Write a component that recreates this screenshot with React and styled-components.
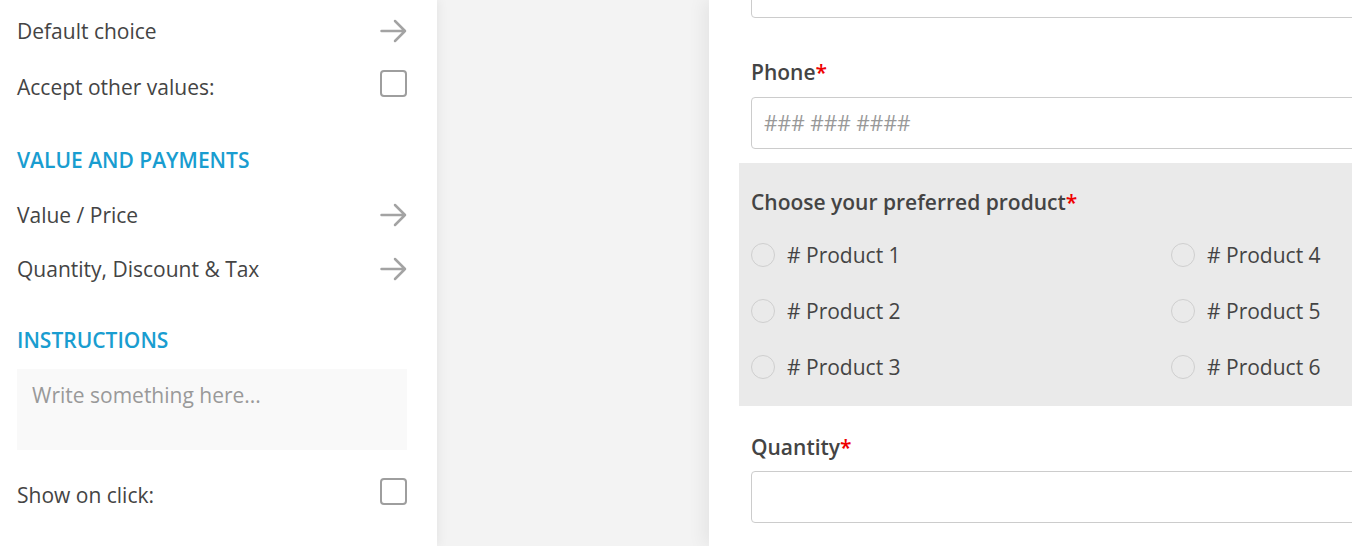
import React from 'react'
import styled, { createGlobalStyle } from 'styled-components'

const Global = createGlobalStyle`
  html, body {
    margin: 0;
    padding: 0;
    background: #f3f3f3;
    font-family: "Open Sans", "Liberation Sans", sans-serif;
    color: #444;
  }
  * { box-sizing: border-box; }
`

const Page = styled.div`
  display: flex;
  width: 1352px;
  height: 546px;
  overflow: hidden;
  background: #f3f3f3;
`

const Sidebar = styled.aside`
  width: 437px;
  flex-shrink: 0;
  background: #fff;
  padding: 4px 30px 0 17px;
  box-shadow: 2px 0 10px rgba(0, 0, 0, 0.06);
  position: relative;
  z-index: 1;
`

const Row = styled.div`
  display: flex;
  align-items: center;
  justify-content: space-between;
  height: ${p => p.h || 54}px;
  margin-top: ${p => p.mt || 0}px;
  font-size: 21px;
  color: #444;
`

const SectionTitle = styled.div`
  margin-top: ${p => p.mt || 0}px;
  line-height: 28px;
  font-size: 21px;
  font-weight: 600;
  color: #199dd0;
  text-transform: uppercase;
`

const Check = styled.span`
  width: 27px;
  height: 27px;
  margin-bottom: 8px;
  border: 2px solid #9e9e9e;
  border-radius: 4px;
`

const Notes = styled.div`
  margin-top: 15px;
  height: 81px;
  background: #f9f9f9;
  padding: 12px 15px;
  font-size: 21px;
  line-height: 28px;
  color: #999;
`

const Gutter = styled.div`
  width: 272px;
  flex-shrink: 0;
`

const Card = styled.main`
  width: 900px;
  flex-shrink: 0;
  background: #fff;
  padding-left: 30px;
  box-shadow: -6px 0 16px rgba(0, 0, 0, 0.06);
  position: relative;
  z-index: 1;
`

const Scroll = styled.div`
  margin-top: -34px;
`

const Field = styled.div`
  padding: 0 0 0 12px;
  margin-top: ${p => p.mt || 0}px;
`

const Label = styled.div`
  font-size: 21px;
  line-height: 28px;
  font-weight: 600;
  color: #444;
  margin-bottom: ${p => p.mb || 11}px;

  span {
    color: #e00;
  }
`

const Input = styled.div`
  height: 52px;
  border: 1px solid #ccc;
  border-radius: 4px;
  padding: 0 12px;
  display: flex;
  align-items: center;
  font-size: 21px;
  color: #999;
`

const Group = styled.div`
  margin-top: ${p => p.mt || 0}px;
  background: #eaeaea;
  padding: 25px 12px 11px;
`

const Options = styled.div`
  display: grid;
  grid-template-columns: 420px 1fr;
  grid-auto-flow: column;
  grid-template-rows: repeat(3, 56px);
`

const Option = styled.label`
  display: flex;
  align-items: center;
  gap: 12px;
  font-size: 21px;
  color: #444;
`

const Radio = styled.span`
  width: 24px;
  height: 24px;
  border-radius: 50%;
  border: 1px solid #cfcfcf;
`

const Arrow = () => (
  <svg width="27" height="24" viewBox="0 0 27 24" fill="none" stroke="#a3a3a3" strokeWidth="2.5" strokeLinecap="round" strokeLinejoin="round">
    <path d="M1.5 12H25M15 2l10 10-10 10" />
  </svg>
)

const App = () => {
  const products = [1, 2, 3, 4, 5, 6]

  return (
    <Page>
      <Global />
      <Sidebar>
        <Row h={54}>Default choice<Arrow /></Row>
        <Row h={58}>Accept other values:<Check /></Row>
        <SectionTitle mt={30}>Value and payments</SectionTitle>
        <Row h={54} mt={14}>Value / Price<Arrow /></Row>
        <Row h={53}>Quantity, Discount &amp; Tax<Arrow /></Row>
        <SectionTitle mt={31}>Instructions</SectionTitle>
        <Notes>Write something here...</Notes>
        <Row h={54} mt={18}>Show on click:<Check /></Row>
      </Sidebar>
      <Gutter />
      <Card>
        <Scroll>
          <Field>
            <Input />
          </Field>
          <Field mt={40}>
            <Label>Phone<span>*</span></Label>
            <Input>### ### ####</Input>
          </Field>
          <Group mt={14}>
            <Label>Choose your preferred product<span>*</span></Label>
            <Options>
              {products.map(n => (
                <Option key={n}>
                  <Radio />
                  # Product {n}
                </Option>
              ))}
            </Options>
          </Group>
          <Field mt={27}>
            <Label mb={10}>Quantity<span>*</span></Label>
            <Input />
          </Field>
        </Scroll>
      </Card>
    </Page>
  )
}

export default App
